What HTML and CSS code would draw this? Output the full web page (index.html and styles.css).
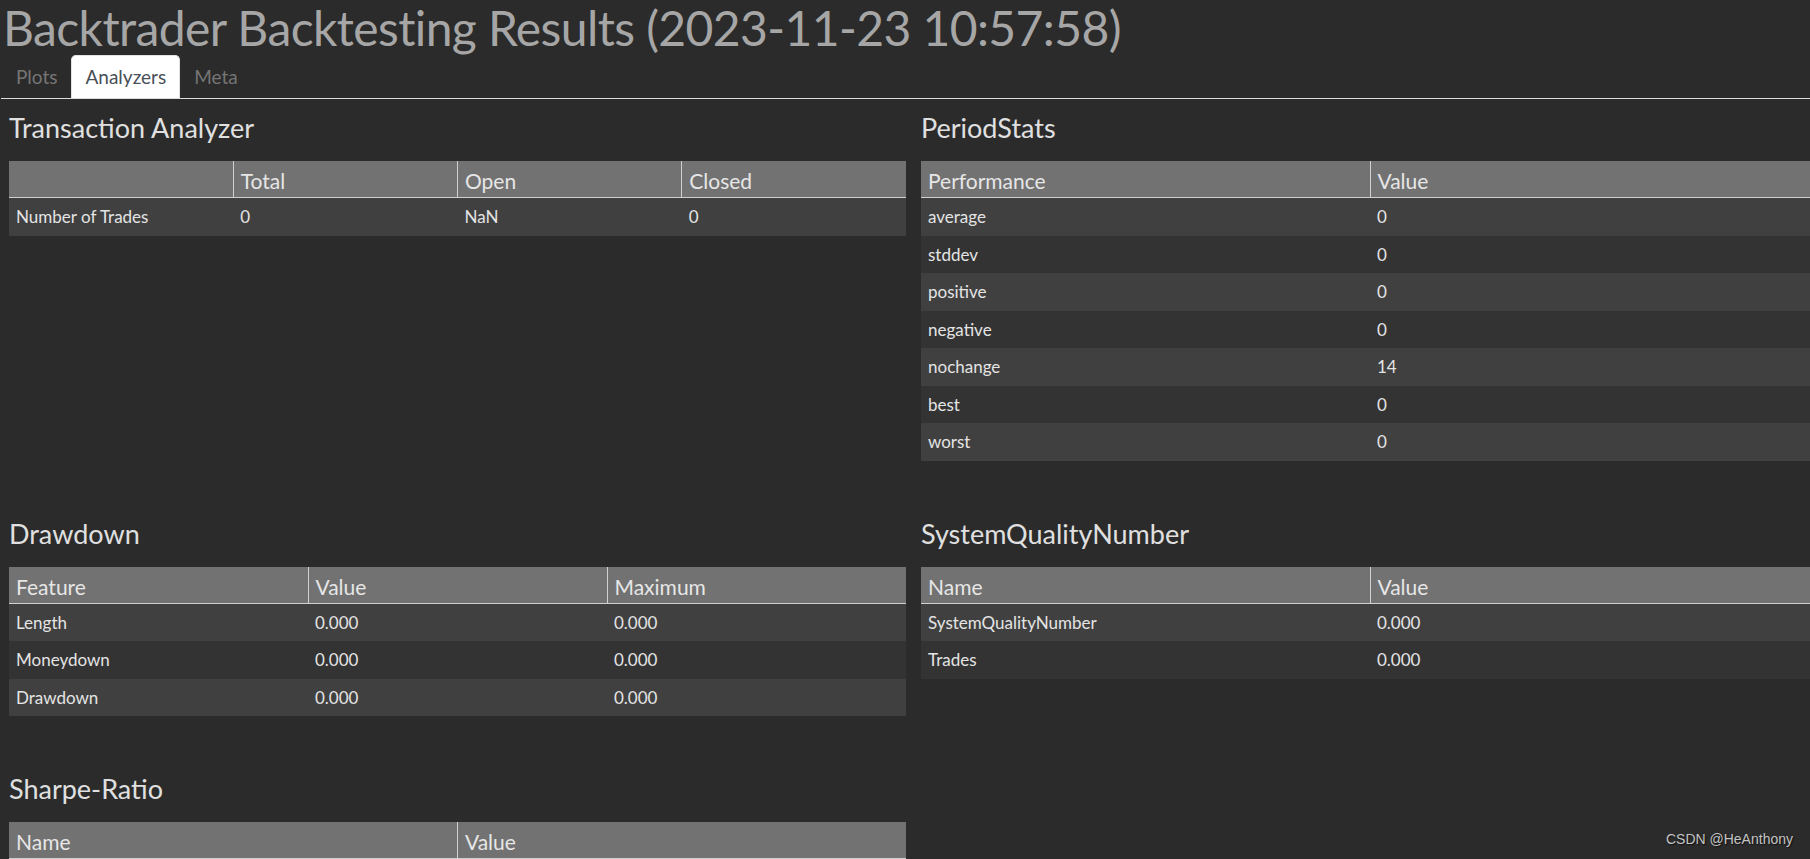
FILE: index.html
```html
<!DOCTYPE html>
<html lang="en">
<head>
<meta charset="utf-8">
<title>Backtrader Backtesting Results</title>
<link rel="stylesheet" href="styles.css">
</head>
<body>
<h1 class="title">Backtrader Backtesting Results (2023-11-23 10:57:58)</h1>
<ul class="tabs">
  <li class="tab">Plots</li>
  <li class="tab active">Analyzers</li>
  <li class="tab">Meta</li>
</ul>
<div class="grid">
  <section class="panel">
    <h3 class="panel-title">Transaction Analyzer</h3>
    <table class="data">
      <thead><tr><th></th><th>Total</th><th>Open</th><th>Closed</th></tr></thead>
      <tbody>
        <tr><td>Number of Trades</td><td>0</td><td>NaN</td><td>0</td></tr>
      </tbody>
    </table>
  </section>
  <section class="panel">
    <h3 class="panel-title">PeriodStats</h3>
    <table class="data">
      <colgroup><col class="col-half"><col></colgroup>
      <thead><tr><th>Performance</th><th>Value</th></tr></thead>
      <tbody>
        <tr><td>average</td><td>0</td></tr>
        <tr><td>stddev</td><td>0</td></tr>
        <tr><td>positive</td><td>0</td></tr>
        <tr><td>negative</td><td>0</td></tr>
        <tr><td>nochange</td><td>14</td></tr>
        <tr><td>best</td><td>0</td></tr>
        <tr><td>worst</td><td>0</td></tr>
      </tbody>
    </table>
  </section>
  <section class="panel">
    <h3 class="panel-title">Drawdown</h3>
    <table class="data">
      <thead><tr><th>Feature</th><th>Value</th><th>Maximum</th></tr></thead>
      <tbody>
        <tr><td>Length</td><td>0.000</td><td>0.000</td></tr>
        <tr><td>Moneydown</td><td>0.000</td><td>0.000</td></tr>
        <tr><td>Drawdown</td><td>0.000</td><td>0.000</td></tr>
      </tbody>
    </table>
  </section>
  <section class="panel">
    <h3 class="panel-title">SystemQualityNumber</h3>
    <table class="data">
      <colgroup><col class="col-half"><col></colgroup>
      <thead><tr><th>Name</th><th>Value</th></tr></thead>
      <tbody>
        <tr><td>SystemQualityNumber</td><td>0.000</td></tr>
        <tr><td>Trades</td><td>0.000</td></tr>
      </tbody>
    </table>
  </section>
  <section class="panel">
    <h3 class="panel-title">Sharpe-Ratio</h3>
    <table class="data">
      <thead><tr><th>Name</th><th>Value</th></tr></thead>
    </table>
  </section>
</div>
<div class="watermark">CSDN @HeAnthony</div>
</body>
</html>
```
FILE: styles.css
```css
html, body {
  margin: 0;
  padding: 0;
}
html {
  overflow: hidden;
}
body {
  position: relative;
  min-height: 859px;
  background: #2b2b2b;
  font-family: Lato, "Open Sans", sans-serif;
  color: #e2e2e2;
}
.title {
  margin: 0;
  padding-left: 3px;
  height: 55px;
  font-size: 48px;
  letter-spacing: -0.6px;
  line-height: 55px;
  font-weight: 400;
  color: #a6a6a6;
  white-space: nowrap;
}
.tabs {
  list-style: none;
  display: flex;
  margin: 0 0 0 1px;
  padding: 0 0 0 1px;
  border-bottom: 1px solid #dcdcdc;
}
.tab {
  padding: 6px 13px;
  font-size: 19px;
  line-height: 30px;
  color: #757575;
  border: 1px solid transparent;
  border-bottom: 0;
  border-radius: 5px 5px 0 0;
}
.tab.active {
  background: #ffffff;
  color: #495057;
  border-color: #e3e3e3;
}
.grid {
  display: grid;
  grid-template-columns: 897px 1fr;
  column-gap: 15px;
  row-gap: 44px;
  padding-left: 9px;
  align-items: start;
}
.panel {
  padding-top: 12px;
}
.panel-title {
  margin: 0 0 16px;
  font-size: 27px;
  line-height: 34px;
  font-weight: 400;
  color: #e0e0e0;
}
.data {
  width: 100%;
  border-collapse: collapse;
  table-layout: fixed;
}
.col-half {
  width: 449px;
}
.data th {
  background: #727272;
  color: #e6e6e6;
  font-size: 21px;
  line-height: 26px;
  font-weight: 400;
  text-align: left;
  padding: 7px 7px 3px;
  border-bottom: 1px solid #d0d0d0;
}
.data th + th {
  border-left: 1px solid #d0d0d0;
}
.data td {
  font-size: 17px;
  line-height: 23.5px;
  padding: 7px 7px;
  color: #e4e4e4;
}
.data tbody tr:nth-child(odd) {
  background: #404040;
}
.data tbody tr:nth-child(even) {
  background: #333333;
}
.watermark {
  position: absolute;
  right: 17px;
  top: 830px;
  font-family: "Liberation Sans", Arial, sans-serif;
  font-size: 14px;
  line-height: 18px;
  color: #c4c4c4;
  text-shadow: 1px 1px 1px #111;
}
```
